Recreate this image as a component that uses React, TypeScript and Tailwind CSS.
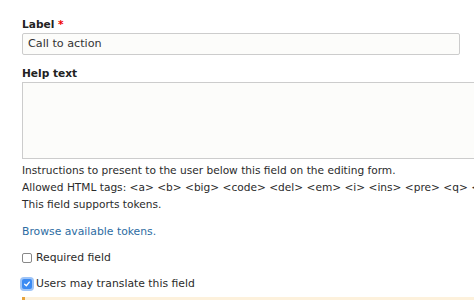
export default function App() {
  return (
    <div className="h-[300px] w-[474px] overflow-hidden bg-white pl-[22px] font-['DejaVu_Sans',sans-serif] text-[10.6px] text-[#2b2b2b]">
      <div className="pt-[16px]">
        <label className="block text-[10.6px] font-bold leading-[16px] text-[#222]">
          Label <span className="text-[#e00]">*</span>
        </label>
        <div className="mt-[1px] flex h-[22px] w-[438px] items-center rounded-[2px] border border-[#ccc] bg-[#fcfcfa] px-[5px] text-[11.2px] text-[#333]">
          Call to action
        </div>
      </div>

      <div className="pt-[10px]">
        <label className="block text-[10.6px] font-bold leading-[16px] text-[#222]">Help text</label>
        <div className="mt-[1px] h-[77px] w-[470px] border border-[#ccc] bg-[#fcfcfa]" />
        <div className="mt-[3px] whitespace-nowrap leading-[17px]">
          <div>Instructions to present to the user below this field on the editing form.</div>
          <div className="w-[452px] overflow-hidden">
            {"Allowed HTML tags: <a> <b> <big> <code> <del> <em> <i> <ins> <pre> <q> <small> <span> <strong>"}
          </div>
          <div>This field supports tokens.</div>
        </div>
      </div>

      <a className="mt-[10px] block text-[10.8px] leading-[17px] text-[#2d6ca2]">Browse available tokens.</a>

      <label className="mt-[9px] flex items-center gap-[4px] leading-[17px]">
        <span className="h-[10px] w-[10px] rounded-[2px] border border-[#888] bg-white" />
        <span className="text-[10.8px]">Required field</span>
      </label>

      <label className="mt-[9px] flex items-center gap-[4px] leading-[17px]">
        <span className="flex h-[10px] w-[10px] items-center justify-center rounded-[2px] bg-[#3b8bf3] ring-[2px] ring-[#9ec4f7]">
          <svg viewBox="0 0 12 12" className="h-[8px] w-[8px]">
            <path d="M2.5 6.3 L5 8.6 L9.5 3.2" fill="none" stroke="white" strokeWidth="2" strokeLinecap="round" strokeLinejoin="round" />
          </svg>
        </span>
        <span className="text-[10.8px]">Users may translate this field</span>
      </label>

      <div className="mt-[5px] flex h-[10px]">
        <div className="w-[3px] bg-[#e7a33b]" />
        <div className="flex-1 bg-[#fdf1dc]" />
      </div>
    </div>
  );
}
